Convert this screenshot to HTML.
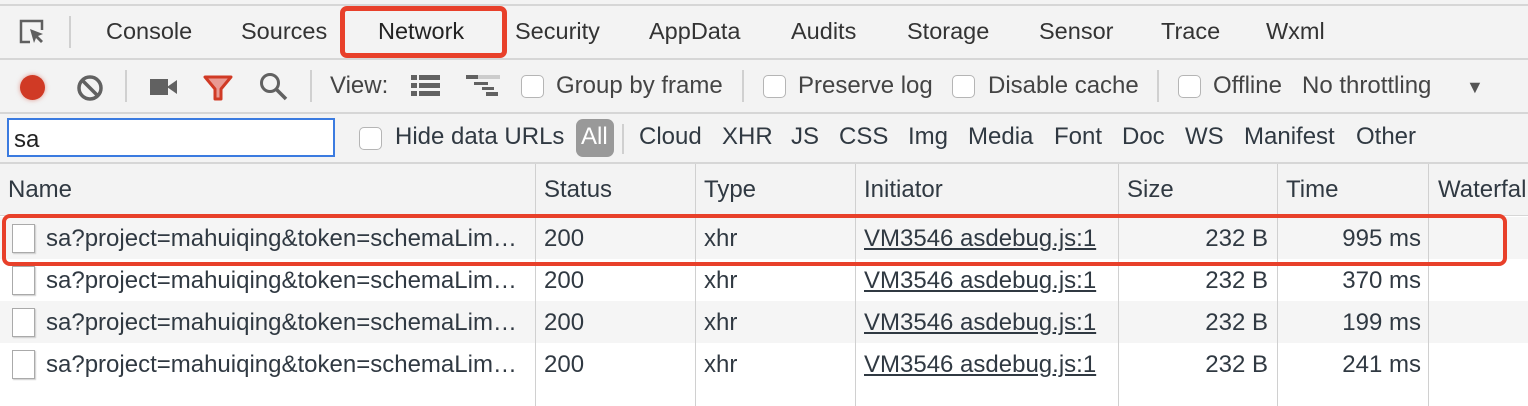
<!DOCTYPE html>
<html><head><meta charset="utf-8"><style>
*{margin:0;padding:0;box-sizing:border-box}
body{width:1528px;height:406px;overflow:hidden;background:#fff;font-family:"Liberation Sans",Arial,sans-serif;position:relative;color:#303942}
.a{position:absolute;white-space:nowrap}
.t{font-size:23.5px;color:#333;top:18px}
.f{font-size:24px;top:123px;color:#303942}
.b{font-size:24px;top:72px;color:#444}
.hl{position:absolute;left:0;width:1528px;height:2px;background:#d6d6d6}
.cb{position:absolute;width:23px;height:23px;border:1.5px solid #b5b5b5;border-radius:5px;background:#fff}
.vs{position:absolute;width:2px;background:#d0d0d0}
.row{position:absolute;left:0;width:1528px;height:42px;font-size:24px}
.row .a{top:8px}
.r{text-align:right}
.cd{position:absolute;top:164px;width:1px;height:242px;background:#d0d0d0}
.doc{position:absolute;left:12px;top:7px;width:23px;height:29px;border:1.5px solid #aaa;background:#fff;box-shadow:1px 1px 1px #ccc}
u{text-decoration:underline}
.h{position:absolute;top:176px;font-size:24px}
</style></head><body>
<div style="position:absolute;left:0;top:0;width:1528px;height:164px;background:#f3f3f3"></div>
<div class="hl" style="top:4px"></div>
<div class="hl" style="top:58px"></div>
<div class="hl" style="top:112px"></div>
<div class="hl" style="top:162px"></div>
<svg class="a" style="left:18px;top:18px" width="30" height="30" viewBox="0 0 30 30"><path d="M12 24H3V3h21v9" fill="none" stroke="#5f5f5f" stroke-width="2.5"/><path d="M12 11l13 5-5 2 5 5-2 2-5-5-2 5z" fill="#5f5f5f"/></svg>
<div class="vs" style="left:69px;top:16px;height:32px"></div>
<div class="a t" style="left:106px">Console</div>
<div class="a t" style="left:241px">Sources</div>
<div class="a t" style="left:378px;color:#222">Network</div>
<div class="a t" style="left:515px">Security</div>
<div class="a t" style="left:649px">AppData</div>
<div class="a t" style="left:791px">Audits</div>
<div class="a t" style="left:907px">Storage</div>
<div class="a t" style="left:1039px">Sensor</div>
<div class="a t" style="left:1161px">Trace</div>
<div class="a t" style="left:1266px">Wxml</div>
<div class="a" style="left:340px;top:6px;width:167px;height:52px;border:5px solid #e8402a;border-radius:7px"></div>
<div class="a" style="left:20px;top:75px;width:25px;height:25px;border-radius:50%;background:#d03a25;box-shadow:0 0 5px rgba(208,58,37,.5)"></div>
<svg class="a" style="left:76px;top:74px" width="28" height="28"><circle cx="14" cy="14" r="11" fill="none" stroke="#616161" stroke-width="3.5"/><path d="M6 6L22 22" stroke="#616161" stroke-width="3.5"/></svg>
<div class="vs" style="left:125px;top:70px;height:32px"></div>
<svg class="a" style="left:150px;top:77px" width="28" height="20"><rect x="0" y="2" width="18" height="16" fill="#616161"/><path d="M17 10l10-7v14z" fill="#616161"/></svg>
<svg class="a" style="left:203px;top:75px" width="30" height="26"><path d="M2 2h26L18 14v10h-6V14z" fill="#e99a93" stroke="#d03a25" stroke-width="3" stroke-linejoin="round"/></svg>
<svg class="a" style="left:258px;top:71px" width="32" height="32"><circle cx="12" cy="12" r="8.5" fill="none" stroke="#616161" stroke-width="3"/><path d="M18 18l10 10" stroke="#616161" stroke-width="3.5"/></svg>
<div class="vs" style="left:310px;top:70px;height:32px"></div>
<div class="a b" style="left:330px">View:</div>
<svg class="a" style="left:411px;top:75px" width="30" height="22" fill="#616161"><rect x="0" y="0" width="6" height="5"/><rect x="8" y="0" width="21" height="5"/><rect x="0" y="8" width="6" height="5"/><rect x="8" y="8" width="21" height="5"/><rect x="0" y="16" width="6" height="5"/><rect x="8" y="16" width="21" height="5"/></svg>
<svg class="a" style="left:466px;top:75px" width="34" height="22"><rect x="0" y="0" width="34" height="4" fill="#ccc"/><rect x="0" y="0" width="12" height="4" fill="#616161"/><rect x="8" y="7" width="14" height="3" fill="#616161"/><rect x="16" y="12" width="12" height="3" fill="#616161"/><rect x="20" y="17" width="12" height="4" fill="#616161"/></svg>
<div class="cb" style="left:521px;top:75px"></div>
<div class="a b" style="left:556px">Group by frame</div>
<div class="vs" style="left:742px;top:70px;height:32px"></div>
<div class="cb" style="left:763px;top:75px"></div>
<div class="a b" style="left:798px">Preserve log</div>
<div class="cb" style="left:952px;top:75px"></div>
<div class="a b" style="left:988px">Disable cache</div>
<div class="vs" style="left:1157px;top:70px;height:32px"></div>
<div class="cb" style="left:1178px;top:75px"></div>
<div class="a b" style="left:1213px">Offline</div>
<div class="a b" style="left:1302px">No throttling</div>
<div class="a" style="left:1466px;top:77px;font-size:18px;color:#555">▼</div>
<div class="a" style="left:7px;top:118px;width:328px;height:39px;border:2px solid #3b7be0;background:#fff"></div>
<div class="a" style="left:14px;top:126px;font-size:24px;color:#222">sa</div>
<div class="cb" style="left:359px;top:127px"></div>
<div class="a f" style="left:395px">Hide data URLs</div>
<div class="a" style="left:576px;top:119px;width:38px;height:38px;border-radius:7px;background:#999"></div>
<div class="a f" style="left:581px;color:#fff">All</div>
<div class="vs" style="left:622px;top:124px;height:30px"></div>
<div class="a f" style="left:639px">Cloud</div>
<div class="a f" style="left:722px">XHR</div>
<div class="a f" style="left:791px">JS</div>
<div class="a f" style="left:839px">CSS</div>
<div class="a f" style="left:908px">Img</div>
<div class="a f" style="left:968px">Media</div>
<div class="a f" style="left:1054px">Font</div>
<div class="a f" style="left:1122px">Doc</div>
<div class="a f" style="left:1185px">WS</div>
<div class="a f" style="left:1244px">Manifest</div>
<div class="a f" style="left:1356px">Other</div>
<div class="a" style="left:0;top:164px;width:1528px;height:52px;background:#f3f3f3;border-bottom:1px solid #d6d6d6"></div>
<div class="h" style="left:8px">Name</div>
<div class="h" style="left:544px">Status</div>
<div class="h" style="left:704px">Type</div>
<div class="h" style="left:864px">Initiator</div>
<div class="h" style="left:1127px">Size</div>
<div class="h" style="left:1286px">Time</div>
<div class="h" style="left:1438px">Waterfall</div>
<div class="row" style="top:217px;background:#f5f5f5"><div class="doc"></div><div class="a" style="left:46px">sa?project=mahuiqing&amp;token=schemaLim…</div><div class="a" style="left:544px">200</div><div class="a" style="left:704px">xhr</div><div class="a" style="left:864px"><u>VM3546 asdebug.js:1</u></div><div class="a r" style="right:260px">232 B</div><div class="a r" style="right:107px">995 ms</div></div>
<div class="row" style="top:259px"><div class="doc"></div><div class="a" style="left:46px">sa?project=mahuiqing&amp;token=schemaLim…</div><div class="a" style="left:544px">200</div><div class="a" style="left:704px">xhr</div><div class="a" style="left:864px"><u>VM3546 asdebug.js:1</u></div><div class="a r" style="right:260px">232 B</div><div class="a r" style="right:107px">370 ms</div></div>
<div class="row" style="top:301px;background:#f5f5f5"><div class="doc"></div><div class="a" style="left:46px">sa?project=mahuiqing&amp;token=schemaLim…</div><div class="a" style="left:544px">200</div><div class="a" style="left:704px">xhr</div><div class="a" style="left:864px"><u>VM3546 asdebug.js:1</u></div><div class="a r" style="right:260px">232 B</div><div class="a r" style="right:107px">199 ms</div></div>
<div class="row" style="top:343px"><div class="doc"></div><div class="a" style="left:46px">sa?project=mahuiqing&amp;token=schemaLim…</div><div class="a" style="left:544px">200</div><div class="a" style="left:704px">xhr</div><div class="a" style="left:864px"><u>VM3546 asdebug.js:1</u></div><div class="a r" style="right:260px">232 B</div><div class="a r" style="right:107px">241 ms</div></div>
<div class="cd" style="left:535px"></div>
<div class="cd" style="left:695px"></div>
<div class="cd" style="left:855px"></div>
<div class="cd" style="left:1118px"></div>
<div class="cd" style="left:1277px"></div>
<div class="cd" style="left:1428px"></div>
<div class="a" style="left:2px;top:214px;width:1505px;height:52px;border:4.5px solid #e8402a;border-radius:8px"></div>
</body></html>
